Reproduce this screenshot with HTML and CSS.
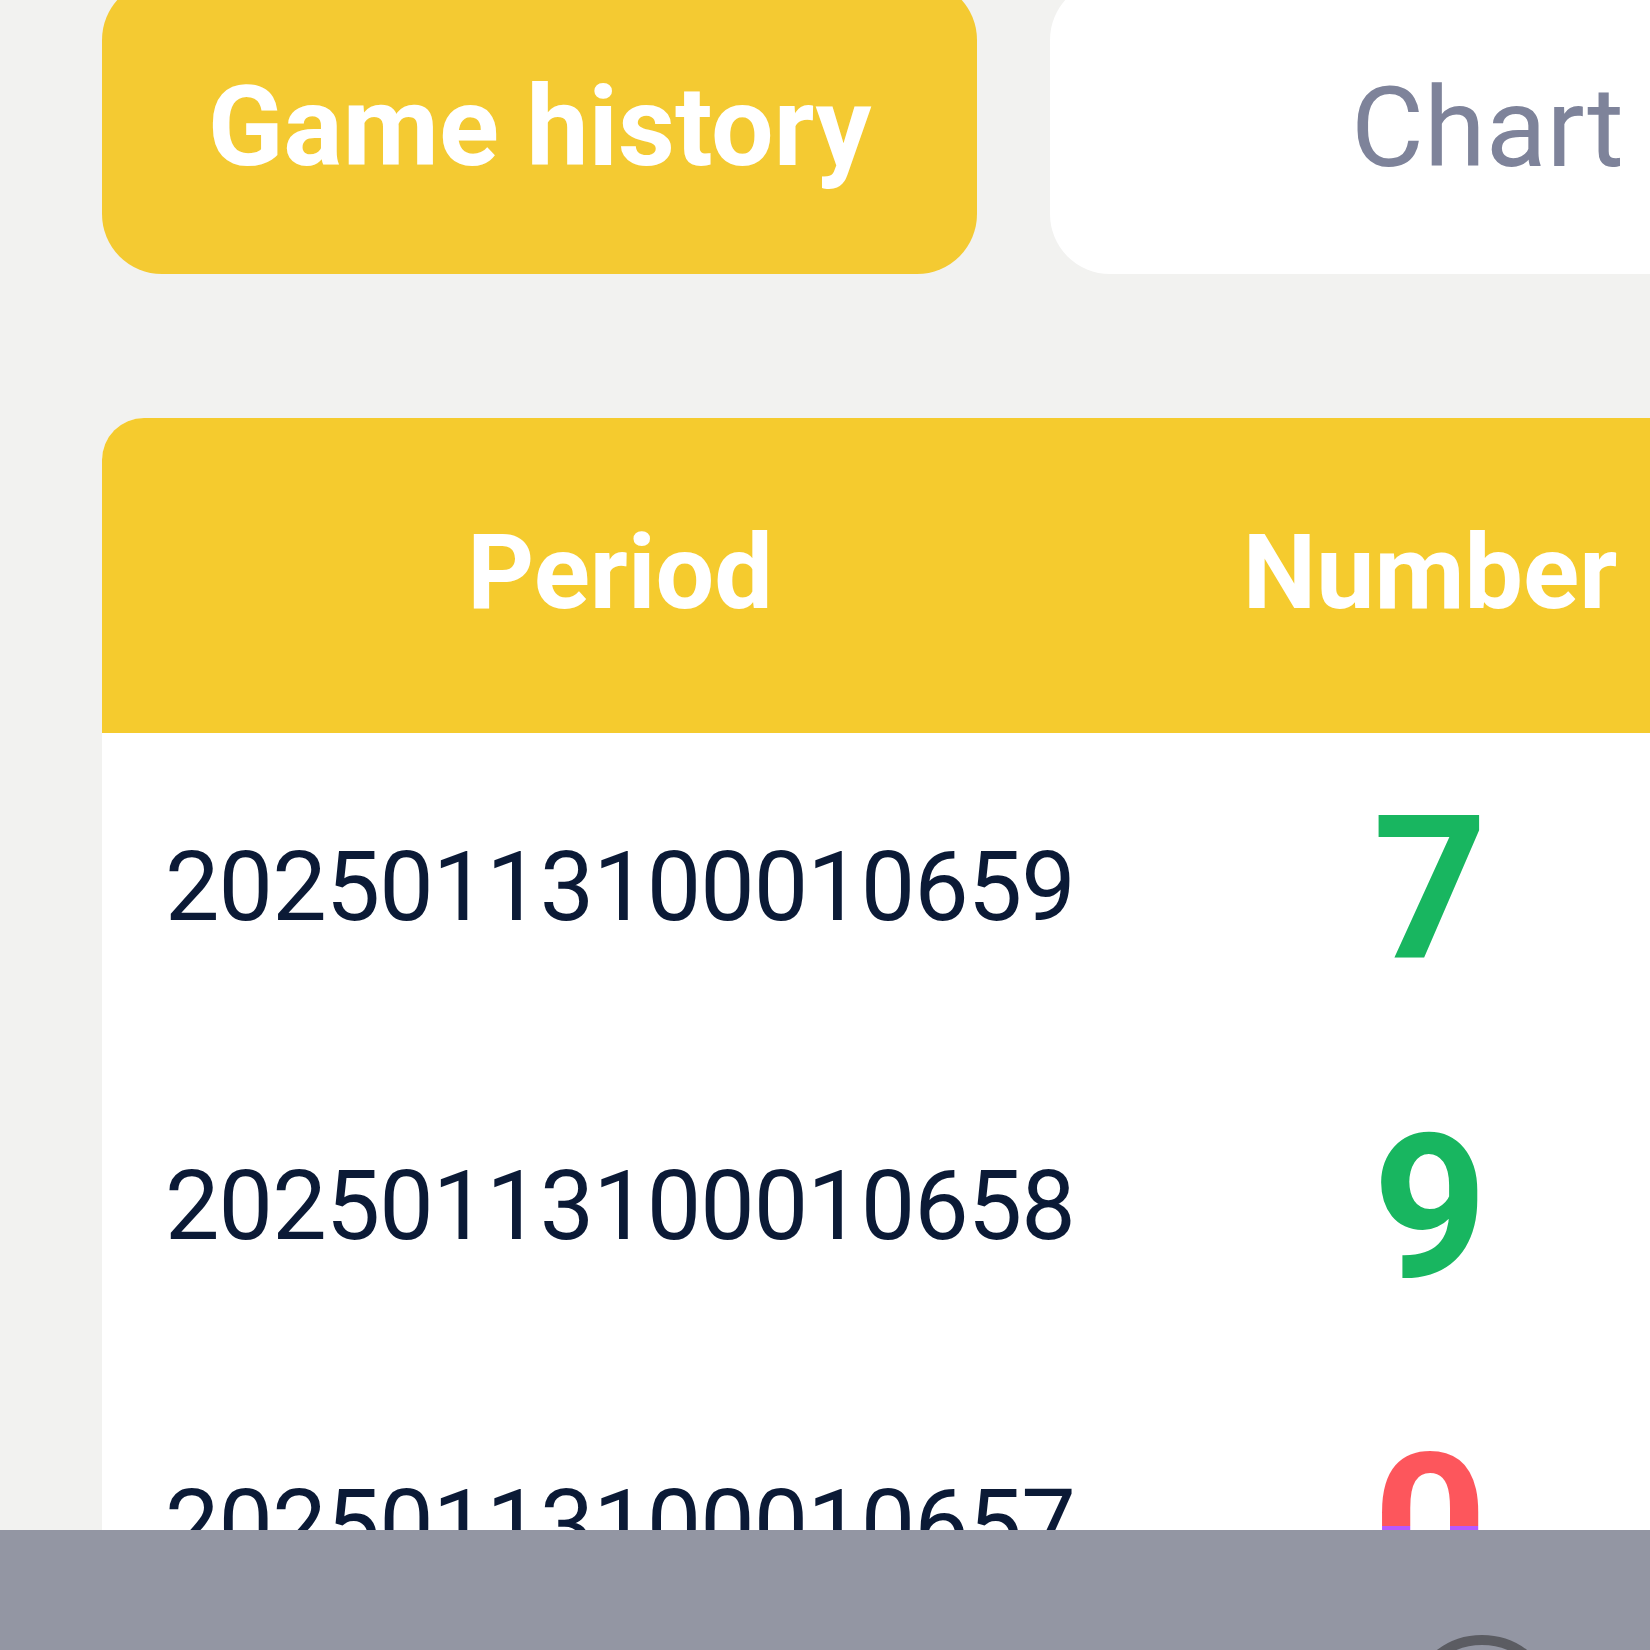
FILE: index.html
```html
<!DOCTYPE html>
<html lang="en">
<head>
<meta charset="utf-8">
<title>Game history</title>
<link rel="stylesheet" href="styles.css">
</head>
<body>
<div class="page">
  <div class="tabs">
    <div class="tab tab-active">Game history</div>
    <div class="tab"><span class="tab-label">Chart</span></div>
  </div>
  <div class="table">
    <div class="row head">
      <div class="cell">Period</div>
      <div class="cell">Number</div>
    </div>
    <div class="row">
      <div class="cell period">20250113100010659</div>
      <div class="cell"><span class="num green">7</span></div>
    </div>
    <div class="row">
      <div class="cell period">20250113100010658</div>
      <div class="cell"><span class="num green">9</span></div>
    </div>
    <div class="row">
      <div class="cell period">20250113100010657</div>
      <div class="cell"><span class="num redviolet">0</span></div>
    </div>
  </div>
</div>
<div class="overlay">
  <svg class="spinner" width="150" height="150" viewBox="0 0 150 150">
    <circle cx="75" cy="75" r="70" fill="none" stroke="#5b5c62" stroke-width="10"/>
  </svg>
</div>
</body>
</html>
```
FILE: styles.css
```css
html, body {
  margin: 0;
  padding: 0;
}
body {
  width: 1650px;
  height: 1650px;
  overflow: hidden;
  background: #f2f2f0;
  font-family: Roboto, "Liberation Sans", Arial, sans-serif;
  position: relative;
}
.page {
  padding-left: 102px;
  display: flex;
  flex-direction: column;
  gap: 144px;
  margin-top: -20px;
}
.tabs {
  display: flex;
  gap: 73px;
}
.tab {
  flex: 0 0 875px;
  height: 294px;
  border-radius: 60px;
  background: #ffffff;
  color: #7e839a;
  font-size: 112px;
  font-weight: 400;
  display: flex;
  align-items: center;
  justify-content: center;
  white-space: nowrap;
}
.tab-active {
  background: #f4ca32;
  color: #ffffff;
  font-size: 111px;
  font-weight: 700;
}
.table {
  width: 1700px;
  background: #ffffff;
  border-top-left-radius: 42px;
  overflow: hidden;
}
.row {
  display: grid;
  grid-template-columns: 1036px 584px;
  height: 319px;
}
.row.head {
  height: 315px;
  background: #f5cb2e;
  color: #ffffff;
  font-size: 104px;
  font-weight: 700;
}
.cell {
  display: flex;
  align-items: center;
  justify-content: center;
  white-space: nowrap;
  padding-bottom: 6px;
}
.head .cell {
  padding-bottom: 6px;
}
.period {
  font-size: 97px;
  letter-spacing: -1px;
  color: #0b1a36;
  font-weight: 400;
  padding-bottom: 12px;
}
.num {
  font-size: 200px;
  font-weight: 700;
  line-height: 1;
}
.green {
  color: #18b660;
}
.redviolet {
  color: transparent;
  background: linear-gradient(180deg, #fd565c 0%, #fd565c 49%, #b659fe 49%, #b659fe 100%);
  -webkit-background-clip: text;
  background-clip: text;
}
.overlay {
  position: absolute;
  left: 0;
  top: 1530px;
  width: 1650px;
  height: 120px;
  background: #9396a3;
  overflow: hidden;
}
.spinner {
  position: absolute;
  left: 1407px;
  top: 105px;
}
```
